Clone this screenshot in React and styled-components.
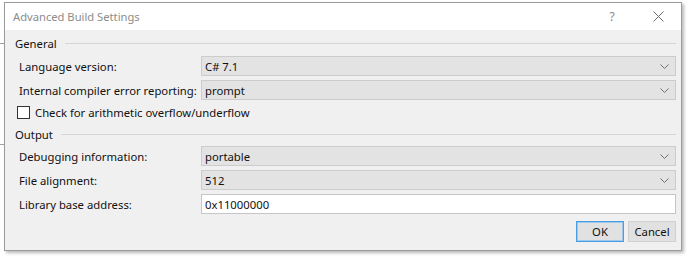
import React from 'react';
import styled, { createGlobalStyle } from 'styled-components';

const GlobalStyle = createGlobalStyle`
  body {
    margin: 0;
    background: #ffffff;
    font-family: "Noto Sans", "Open Sans", sans-serif;
  }
`;

const Page = styled.div`
  position: relative;
  width: 691px;
  height: 258px;
  padding: 2px 0 0 4px;
  box-sizing: border-box;
  overflow: hidden;

  /* bits of the window behind the dialog */
  &::before,
  &::after {
    content: '';
    position: absolute;
    left: 0;
    width: 4px;
    height: 1px;
    background: #a0a0a0;
  }
  &::before {
    top: 43px;
  }
  &::after {
    top: 144px;
  }
`;

const Dialog = styled.div`
  width: 678px;
  height: 249px;
  box-sizing: border-box;
  border: 1px solid #9b9b9b;
  background: #f0f0f0;
  box-shadow: 2px 2px 3px rgba(0, 0, 0, 0.28);
  display: flex;
  flex-direction: column;
`;

const TitleBar = styled.div`
  height: 28px;
  background: #ffffff;
  display: flex;
  align-items: center;
  padding: 0 0 0 8px;
`;

const Title = styled.span`
  flex: 1;
  font-size: 11.2px;
  color: #8c8c8c;
`;

const TitleButton = styled.span`
  width: 46px;
  display: flex;
  justify-content: center;
  align-items: center;
  color: #8a8a8a;
  font-size: 12px;
`;

const Body = styled.div`
  flex: 1;
  padding: 5px 5px 8px 10px;
  display: flex;
  flex-direction: column;
  font-size: 11.3px;
  color: #111111;
`;

const GroupHeader = styled.div`
  height: 16px;
  display: flex;
  align-items: center;
  gap: 8px;
  margin-top: ${(p) => p.$top || 0}px;
  margin-bottom: ${(p) => p.$bottom || 0}px;

  &::after {
    content: '';
    flex: 1;
    height: 1px;
    background: #d5d5d5;
  }
`;

const Row = styled.div`
  display: grid;
  grid-template-columns: 182px 1fr;
  align-items: center;
  height: 20px;
  margin-left: 4px;
  margin-bottom: 4px;
`;

const Label = styled.span`
  white-space: nowrap;
`;

const Combo = styled.div`
  height: 20px;
  box-sizing: border-box;
  border: 1px solid #cccccc;
  background: #e3e3e3;
  display: flex;
  align-items: center;
  padding: 0 6px 0 3px;
`;

const ComboValue = styled.span`
  flex: 1;
`;

const TextBox = styled.div`
  height: 20px;
  box-sizing: border-box;
  border: 1px solid #c6c6c6;
  background: #ffffff;
  display: flex;
  align-items: center;
  padding: 0 3px;
`;

const CheckRow = styled.label`
  display: flex;
  align-items: center;
  gap: 5px;
  height: 16px;
  margin-left: 2px;
`;

const Box = styled.span`
  width: 13px;
  height: 13px;
  box-sizing: border-box;
  border: 1px solid #333333;
  background: #ffffff;
`;

const Footer = styled.div`
  display: flex;
  justify-content: flex-end;
  gap: 4px;
  margin-top: 3px;
`;

const Button = styled.button`
  width: 48px;
  height: 21px;
  box-sizing: border-box;
  font-family: inherit;
  font-size: 11.3px;
  color: #111111;
  background: #e1e1e1;
  border: 1px solid ${(p) => (p.$default ? '#4a9de0' : '#d0d0d0')};
  box-shadow: ${(p) => (p.$default ? 'inset 0 0 0 1px #9cc8ee' : 'none')};
  padding: 0;
`;

const Chevron = () => (
  <svg width="9" height="5" viewBox="0 0 9 5">
    <path d="M0.5 0.5 L4.5 4.5 L8.5 0.5" fill="none" stroke="#707070" strokeWidth="1" />
  </svg>
);

const Select = ({ value }) => (
  <Combo>
    <ComboValue>{value}</ComboValue>
    <Chevron />
  </Combo>
);

const App = () => (
  <Page>
    <GlobalStyle />
    <Dialog>
      <TitleBar>
        <Title>Advanced Build Settings</Title>
        <TitleButton>?</TitleButton>
        <TitleButton>
          <svg width="11" height="11" viewBox="0 0 11 11">
            <path d="M0.5 0.5 L10.5 10.5 M10.5 0.5 L0.5 10.5" stroke="#6e6e6e" strokeWidth="1" />
          </svg>
        </TitleButton>
      </TitleBar>
      <Body>
        <GroupHeader $bottom={5}>General</GroupHeader>
        <Row>
          <Label>Language version:</Label>
          <Select value="C# 7.1" />
        </Row>
        <Row>
          <Label>Internal compiler error reporting:</Label>
          <Select value="prompt" />
        </Row>
        <CheckRow>
          <Box />
          Check for arithmetic overflow/underflow
        </CheckRow>
        <GroupHeader $top={6} $bottom={4}>Output</GroupHeader>
        <Row>
          <Label>Debugging information:</Label>
          <Select value="portable" />
        </Row>
        <Row>
          <Label>File alignment:</Label>
          <Select value="512" />
        </Row>
        <Row>
          <Label>Library base address:</Label>
          <TextBox>0x11000000</TextBox>
        </Row>
        <Footer>
          <Button $default>OK</Button>
          <Button>Cancel</Button>
        </Footer>
      </Body>
    </Dialog>
  </Page>
);

export default App;
